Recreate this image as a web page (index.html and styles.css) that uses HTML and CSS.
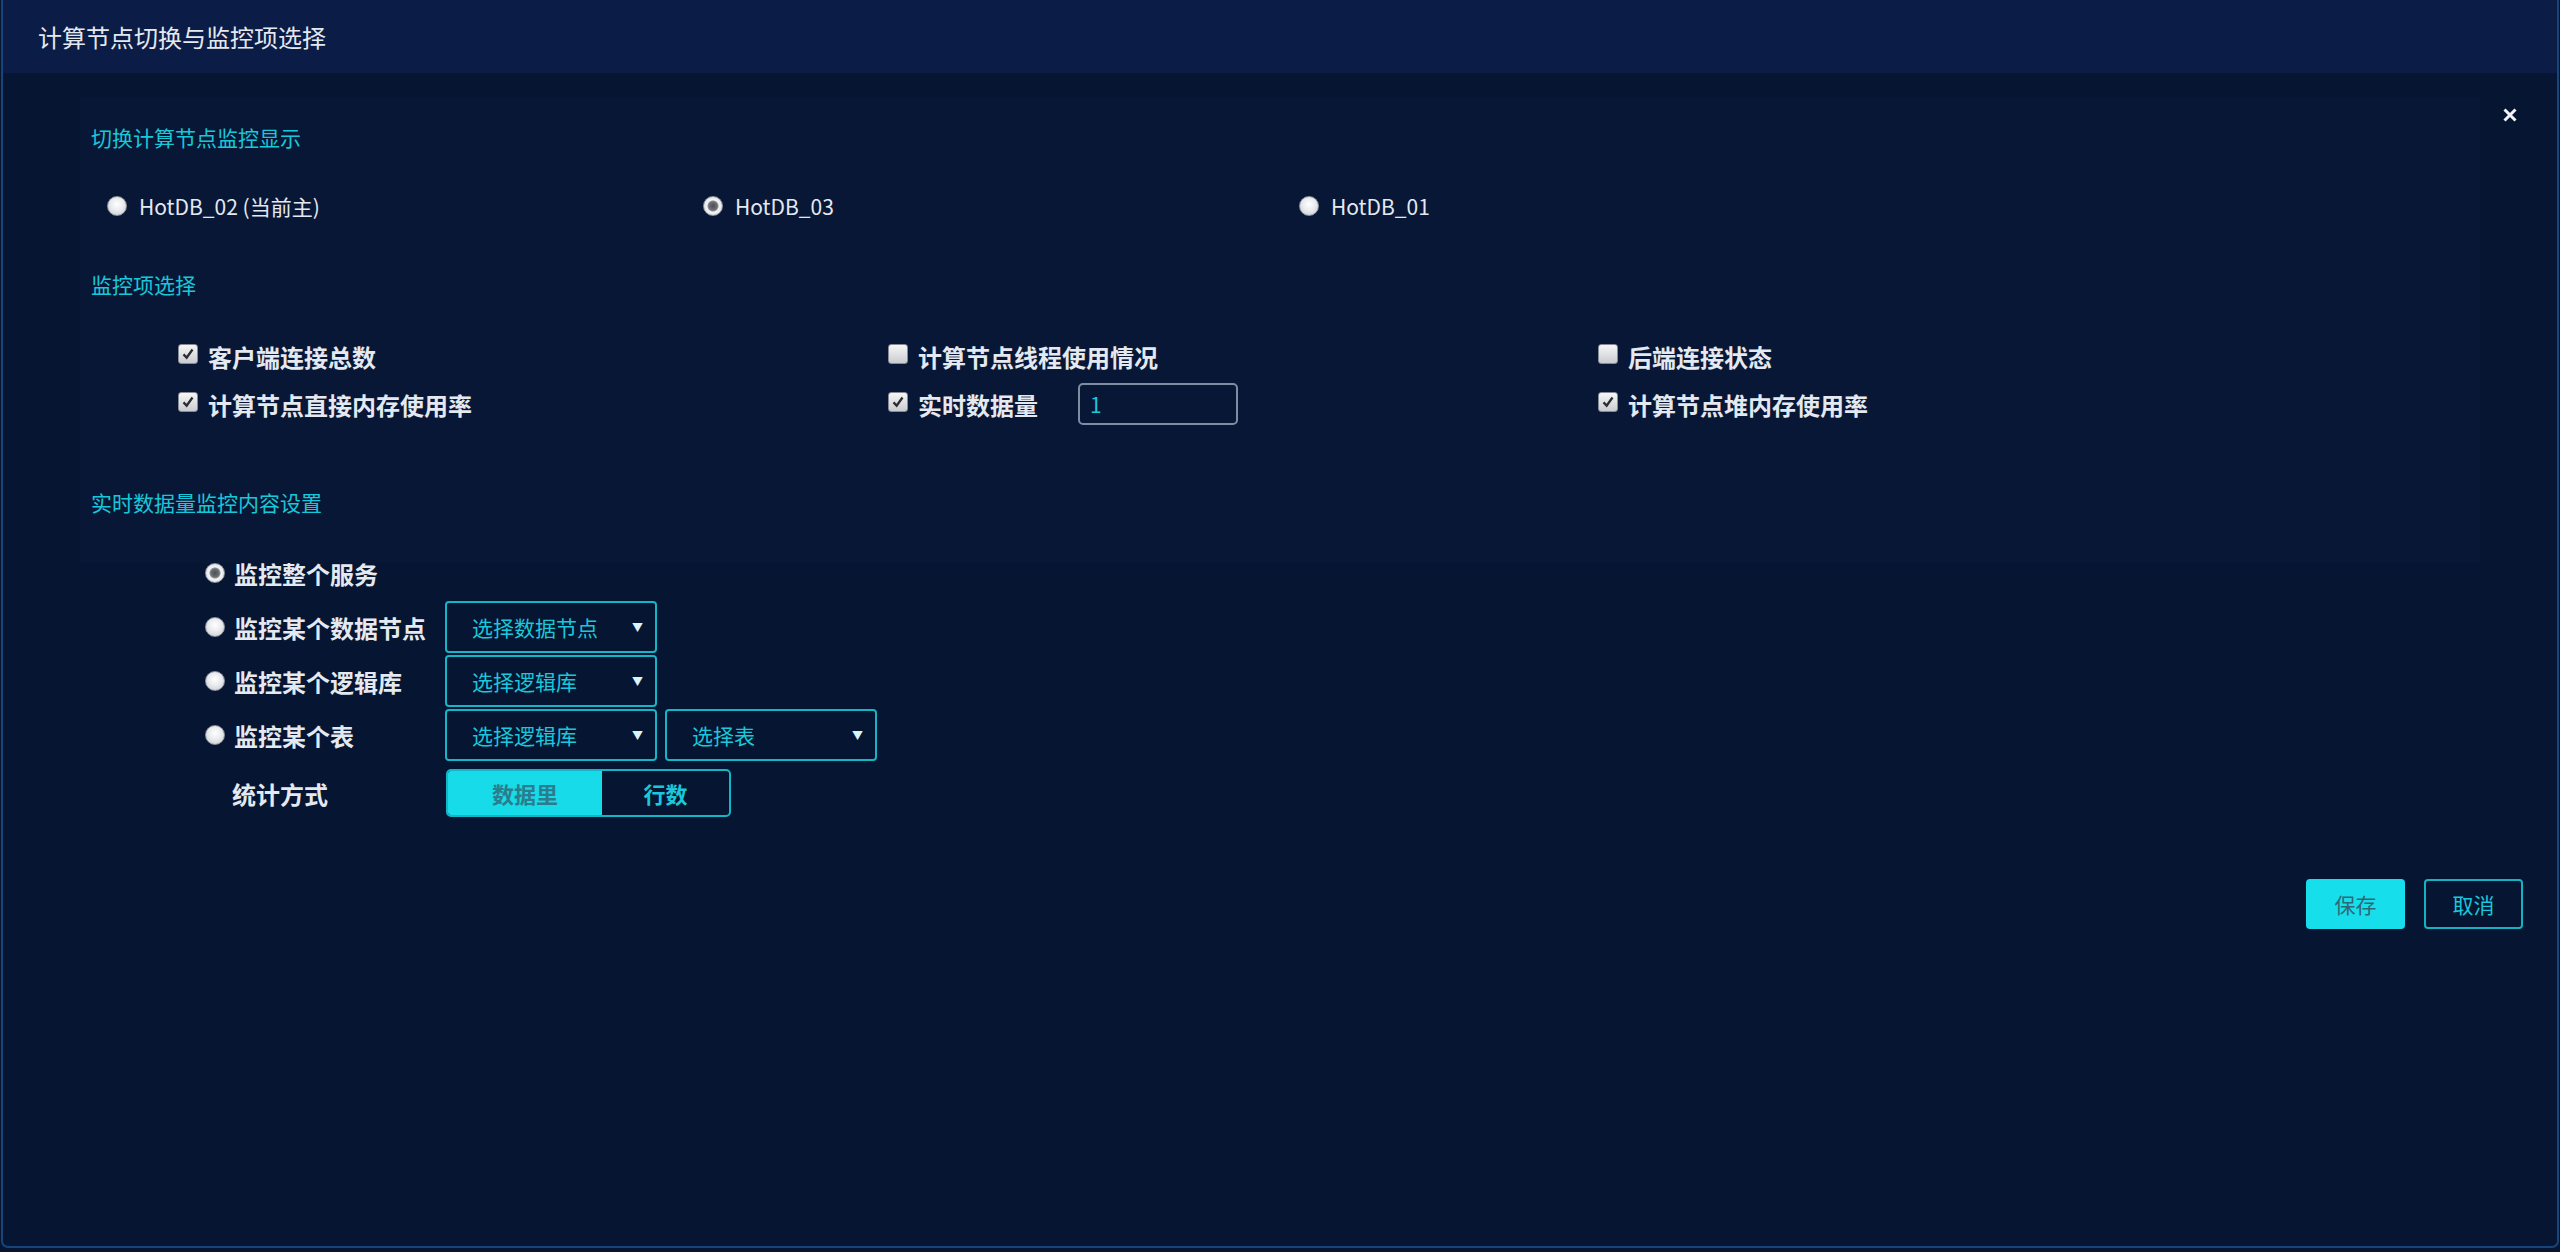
FILE: index.html
```html
<!DOCTYPE html>
<html lang="zh-CN">
<head>
  <meta charset="UTF-8">
  <title>计算节点切换与监控项选择</title>
  <link rel="stylesheet" href="styles.css">
</head>
<body>
  <div class="dialog">
    <div class="dialog-header">计算节点切换与监控项选择</div>
    <div class="dialog-body">
      <a class="close-btn" href="#"><svg viewBox="0 0 16 16"><path d="M2.5 2.5L13.5 13.5M13.5 2.5L2.5 13.5"/></svg></a>

      <div class="panel">
        <div class="section-title first">切换计算节点监控显示</div>
        <div class="node-row">
          <label class="radio-item"><span class="radio"></span>HotDB_02 (当前主)</label>
          <label class="radio-item"><span class="radio checked"></span>HotDB_03</label>
          <label class="radio-item"><span class="radio"></span>HotDB_01</label>
        </div>

        <div class="section-title">监控项选择</div>
        <div class="monitor-grid">
          <label class="check-item"><span class="check checked"><svg viewBox="0 0 20 20"><path d="M5 10.5L8.5 14L15 5"/></svg></span>客户端连接总数</label>
          <label class="check-item"><span class="check"></span>计算节点线程使用情况</label>
          <label class="check-item"><span class="check"></span>后端连接状态</label>
          <label class="check-item"><span class="check checked"><svg viewBox="0 0 20 20"><path d="M5 10.5L8.5 14L15 5"/></svg></span>计算节点直接内存使用率</label>
          <label class="check-item"><span class="check checked"><svg viewBox="0 0 20 20"><path d="M5 10.5L8.5 14L15 5"/></svg></span>实时数据量<input class="num-input" type="text" value="1"></label>
          <label class="check-item"><span class="check checked"><svg viewBox="0 0 20 20"><path d="M5 10.5L8.5 14L15 5"/></svg></span>计算节点堆内存使用率</label>
        </div>

        <div class="section-title third">实时数据量监控内容设置</div>
      </div>

      <div class="scope-list">
        <div class="scope-row">
          <label class="radio-item"><span class="radio checked"></span>监控整个服务</label>
        </div>
        <div class="scope-row">
          <label class="radio-item"><span class="radio"></span>监控某个数据节点</label>
          <div class="select">选择数据节点<span class="arrow">▼</span></div>
        </div>
        <div class="scope-row">
          <label class="radio-item"><span class="radio"></span>监控某个逻辑库</label>
          <div class="select">选择逻辑库<span class="arrow">▼</span></div>
        </div>
        <div class="scope-row">
          <label class="radio-item"><span class="radio"></span>监控某个表</label>
          <div class="select">选择逻辑库<span class="arrow">▼</span></div>
          <div class="select">选择表<span class="arrow">▼</span></div>
        </div>
        <div class="scope-row stat-row">
          <div class="stat-label">统计方式</div>
          <div class="toggle">
            <button class="active">数据里</button>
            <button>行数</button>
          </div>
        </div>
      </div>

      <div class="dialog-footer">
        <button class="btn btn-primary">保存</button>
        <button class="btn btn-default">取消</button>
      </div>
    </div>
  </div>
</body>
</html>
```

FILE: styles.css
```css
* { box-sizing: border-box; font-family: "Noto Sans CJK SC", sans-serif; }
body { margin: 0; padding: 0; background: #061532; overflow: hidden; }

.dialog {
  margin: 0 1px;
  height: 1248px;
  border: 2px solid #17457a;
  border-top: none;
  border-radius: 0 0 7px 7px;
  background: #061532;
  overflow: hidden;
}

.dialog-header {
  height: 73px;
  line-height: 73px;
  padding-left: 35px;
  background: #0b1d47;
  color: #e4e9f0;
  font-size: 24px;
}

.dialog-body {
  position: relative;
  padding-top: 25px;
}

.close-btn {
  position: absolute;
  top: 34px;
  right: 39px;
  width: 16px;
  height: 16px;
}

.close-btn svg {
  display: block;
  width: 16px;
  height: 16px;
  stroke: #f2f4f7;
  stroke-width: 3;
  fill: none;
}

.panel {
  margin-left: 77px;
  width: 2400px;
  padding: 24px 0 46px 11px;
  background: #091737;
}

.section-title {
  margin-top: 48px;
  height: 30px;
  line-height: 30px;
  font-size: 21px;
  color: #17c8d9;
}

.section-title.first { margin-top: 0; }
.section-title.third { margin-top: 61px; }

.node-row {
  margin-top: 39px;
  height: 30px;
  padding-left: 16px;
  display: flex;
}

.node-row .radio-item {
  width: 596px;
  gap: 12px;
  font-size: 21px;
  font-weight: normal;
}

.radio-item {
  display: flex;
  align-items: center;
  gap: 9px;
  color: #e4e9f0;
  font-size: 24px;
  font-weight: bold;
  white-space: nowrap;
}

.radio {
  flex: none;
  width: 20px;
  height: 20px;
  border-radius: 50%;
  border: 1px solid #8e949c;
  background: radial-gradient(circle at 50% 40%, #ffffff 0, #e9ebee 45%, #c3c7cd 100%);
}

.radio.checked {
  background: radial-gradient(circle, #4d4f53 0, #6a6d72 4px, #8d9096 5px, #f3f4f6 6px, #d3d6da 100%);
}

.monitor-grid {
  margin-top: 35px;
  padding-left: 87px;
  display: grid;
  grid-template-columns: 710px 710px 710px;
  grid-auto-rows: 44px;
  row-gap: 4px;
}

.check-item {
  display: flex;
  align-items: center;
  gap: 10px;
  color: #e4e9f0;
  font-size: 24px;
  font-weight: bold;
  white-space: nowrap;
}

.check {
  flex: none;
  width: 20px;
  height: 20px;
  margin-top: -5px;
  border-radius: 3px;
  border: 1px solid #858b93;
  background: linear-gradient(#f6f6f7, #c9ccd0);
}

.check svg {
  display: block;
  width: 18px;
  height: 18px;
  stroke: #2b2d31;
  stroke-width: 2.6;
  fill: none;
}

.num-input {
  margin-left: 30px;
  width: 160px;
  height: 42px;
  padding: 0 10px;
  border: 2px solid #7d8ea3;
  border-radius: 5px;
  background: #091737;
  color: #19c8da;
  font-size: 21px;
  outline: none;
}

.scope-list {
  margin-top: -16px;
  padding-left: 202px;
  display: flex;
  flex-direction: column;
  gap: 2px;
}

.scope-row {
  height: 52px;
  display: flex;
  align-items: center;
}

.scope-row .radio-item {
  width: 240px;
}

.select {
  position: relative;
  width: 212px;
  height: 52px;
  line-height: 48px;
  margin-right: 8px;
  padding-left: 25px;
  border: 2px solid #12b6c7;
  border-radius: 4px;
  color: #19c8da;
  font-size: 21px;
}

.select .arrow {
  position: absolute;
  right: 12px;
  top: 0;
  font-size: 11px;
  color: #d9f5f9;
}

.stat-row {
  margin-top: 6px;
  height: 48px;
}

.stat-label {
  width: 241px;
  padding-left: 27px;
  color: #e4e9f0;
  font-size: 24px;
  font-weight: bold;
}

.toggle {
  display: flex;
  width: 285px;
  height: 48px;
  border: 2px solid #12b6c7;
  border-radius: 5px;
  overflow: hidden;
}

.toggle button {
  flex: 1;
  border: none;
  background: transparent;
  color: #19c8da;
  font-size: 22px;
  font-weight: bold;
  padding: 0;
  cursor: pointer;
}

.toggle button.active {
  flex: none;
  width: 154px;
  background: #17dbe9;
  color: #2b7c8c;
}

.dialog-footer {
  margin-top: 62px;
  padding-right: 34px;
  display: flex;
  justify-content: flex-end;
  gap: 19px;
}

.btn {
  width: 99px;
  height: 50px;
  border-radius: 4px;
  font-size: 21px;
  cursor: pointer;
}

.btn-primary {
  border: none;
  background: #17deeb;
  color: #2e6877;
}

.btn-default {
  border: 2px solid #14b2c3;
  background: transparent;
  color: #19c8da;
}
```
